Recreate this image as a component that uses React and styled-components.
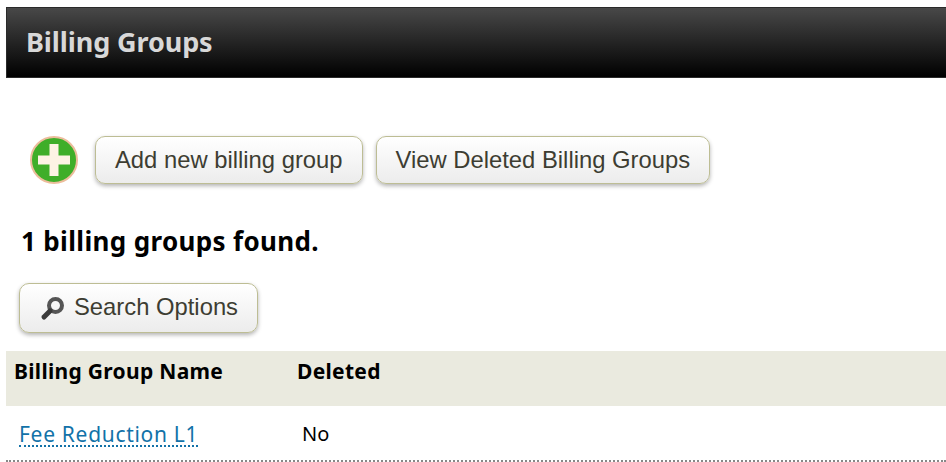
import React from 'react';
import styled, { createGlobalStyle } from 'styled-components';

const GlobalStyle = createGlobalStyle`
  html, body {
    margin: 0;
    padding: 0;
    background: #fff;
    overflow: hidden;
  }
  body {
    font-family: "Noto Sans", sans-serif;
  }
`;

const Page = styled.div`
  width: 946px;
  height: 462px;
  padding: 7px 0 0 6px;
  box-sizing: border-box;
`;

const TitleBar = styled.div`
  height: 69px;
  border: 1px solid #2a2a2a;
  border-right: none;
  background: linear-gradient(#484848, #000);
  display: flex;
  align-items: center;
  padding-left: 19px;
`;

const Title = styled.h1`
  margin: 0 0 2px;
  font-size: 27px;
  font-weight: 700;
  letter-spacing: -0.1px;
  color: #d8d8d8;
`;

const Toolbar = styled.div`
  display: flex;
  align-items: center;
  margin: 56px 0 0 22px;
  gap: 13px;
`;

const AddIcon = styled.svg`
  width: 52px;
  height: 52px;
  margin-right: 2px;
`;

const Button = styled.button`
  height: 48px;
  box-sizing: border-box;
  padding: 0 19px;
  border: 1px solid #bdbd94;
  border-radius: 10px;
  background: linear-gradient(#fff, #ececec);
  box-shadow: 0 2px 4px rgba(0, 0, 0, 0.3);
  font-family: "Liberation Sans", Arial, sans-serif;
  font-size: 23.8px;
  color: #3d3d32;
  display: flex;
  align-items: center;
  gap: 6px;
`;

const Found = styled.h2`
  margin: 38px 0 0 15px;
  font-size: 26px;
  line-height: 34px;
  letter-spacing: 0.35px;
  font-weight: 700;
  color: #000;
`;

const SearchButton = styled(Button)`
  margin: 25px 0 0 13px;
  height: 50px;
  padding: 0 19px 2px 20px;
`;

const Table = styled.div`
  margin-top: 18px;
`;

const HeadRow = styled.div`
  display: grid;
  grid-template-columns: 283px 1fr;
  height: 55px;
  box-sizing: border-box;
  padding: 0 0 16px 8px;
  background: #eaeadf;
  align-items: center;
  font-size: 21px;
  letter-spacing: 0.3px;
  font-weight: 700;
  color: #000;
`;

const BodyRow = styled.div`
  display: grid;
  grid-template-columns: 283px 1fr;
  height: 56px;
  align-items: center;
  padding-left: 13px;
  font-size: 20px;
  color: #000;
  border-bottom: 2px dotted #888;
  box-sizing: border-box;
`;

const GroupLink = styled.a`
  color: #1272a8;
  font-size: 21px;
  letter-spacing: 0.7px;
  text-decoration: none;
  border-bottom: 2px dotted #1272a8;
  justify-self: start;
  line-height: 22px;
  margin-top: 4px;
`;

const App = () => (
  <>
    <GlobalStyle />
    <Page>
      <TitleBar>
        <Title>Billing Groups</Title>
      </TitleBar>
      <Toolbar>
        <AddIcon viewBox="0 0 52 52">
          <circle cx="26" cy="26" r="23" fill="#3fae29" stroke="#ecbd9c" strokeWidth="2" />
          <path d="M21.5 10h9v11.5H42v9H30.5V42h-9V30.5H10v-9h11.5z" fill="#fdf3e4" />
        </AddIcon>
        <Button>Add new billing group</Button>
        <Button>View Deleted Billing Groups</Button>
      </Toolbar>
      <Found>1 billing groups found.</Found>
      <SearchButton>
        <svg width="28" height="28" viewBox="0 0 28 28">
          <circle cx="15.5" cy="12.5" r="6.5" fill="none" stroke="#555" strokeWidth="4" />
          <path d="M10 18L4 24" stroke="#3a3a3a" strokeWidth="5" strokeLinecap="round" />
        </svg>
        Search Options
      </SearchButton>
      <Table>
        <HeadRow>
          <span>Billing Group Name</span>
          <span>Deleted</span>
        </HeadRow>
        <BodyRow>
          <GroupLink href="#">Fee Reduction L1</GroupLink>
          <span>No</span>
        </BodyRow>
      </Table>
    </Page>
  </>
);

export default App;
